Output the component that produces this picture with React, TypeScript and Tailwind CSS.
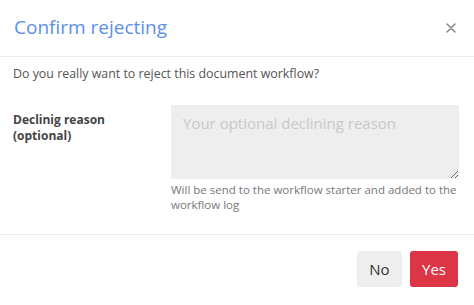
export default function App() {
  return (
    <div className="w-[474px] h-[305px] bg-white font-['Open_Sans',sans-serif] text-[#555]">
      {/* Header */}
      <div className="h-[57px] border-b border-[#ececec] flex items-center justify-between pl-[14px] pr-[17px]">
        <h3 className="text-[19px] text-[#5c8fe8] leading-none pb-[1px]">Confirm rejecting</h3>
        <button className="w-[12px] h-[12px] flex items-center justify-center text-[#888]">
          <svg viewBox="0 0 10 10" className="w-[10px] h-[10px]" stroke="currentColor" strokeWidth="1.6" strokeLinecap="round">
            <path d="M1 1 L9 9 M9 1 L1 9" />
          </svg>
        </button>
      </div>

      {/* Body */}
      <div className="h-[178px] border-b border-[#ececec] pl-[13px] pr-[15px] pt-[8px]">
        <p className="text-[12.4px] leading-[18px] text-[#555]">Do you really want to reject this document workflow?</p>
        <div className="mt-[22px] flex">
          <label className="w-[158px] shrink-0 pt-[7px] text-[12px] leading-[16px] font-bold text-[#444]">
            Declinig reason
            <br />
            (optional)
          </label>
          <div className="flex-1">
            <textarea
              placeholder="Your optional declining reason"
              className="block w-full h-[74px] bg-[#eeeeee] border-0 outline-none px-[12px] pt-[7px] text-[15px] leading-[22px] text-[#555] placeholder:text-[#c9c9c9] resize-y"
            />
            <p className="mt-[3px] text-[11.5px] leading-[15px] text-[#777]">
              Will be send to the workflow starter and added to the workflow log
            </p>
          </div>
        </div>
      </div>

      {/* Footer */}
      <div className="flex justify-end gap-[8px] pt-[16px] pr-[16px]">
        <button className="w-[45px] h-[36px] rounded-[3px] bg-[#eeeeee] text-[15px] text-[#333]">No</button>
        <button className="w-[48px] h-[36px] rounded-[3px] bg-[#dc3545] text-[15px] text-white">Yes</button>
      </div>
    </div>
  );
}
